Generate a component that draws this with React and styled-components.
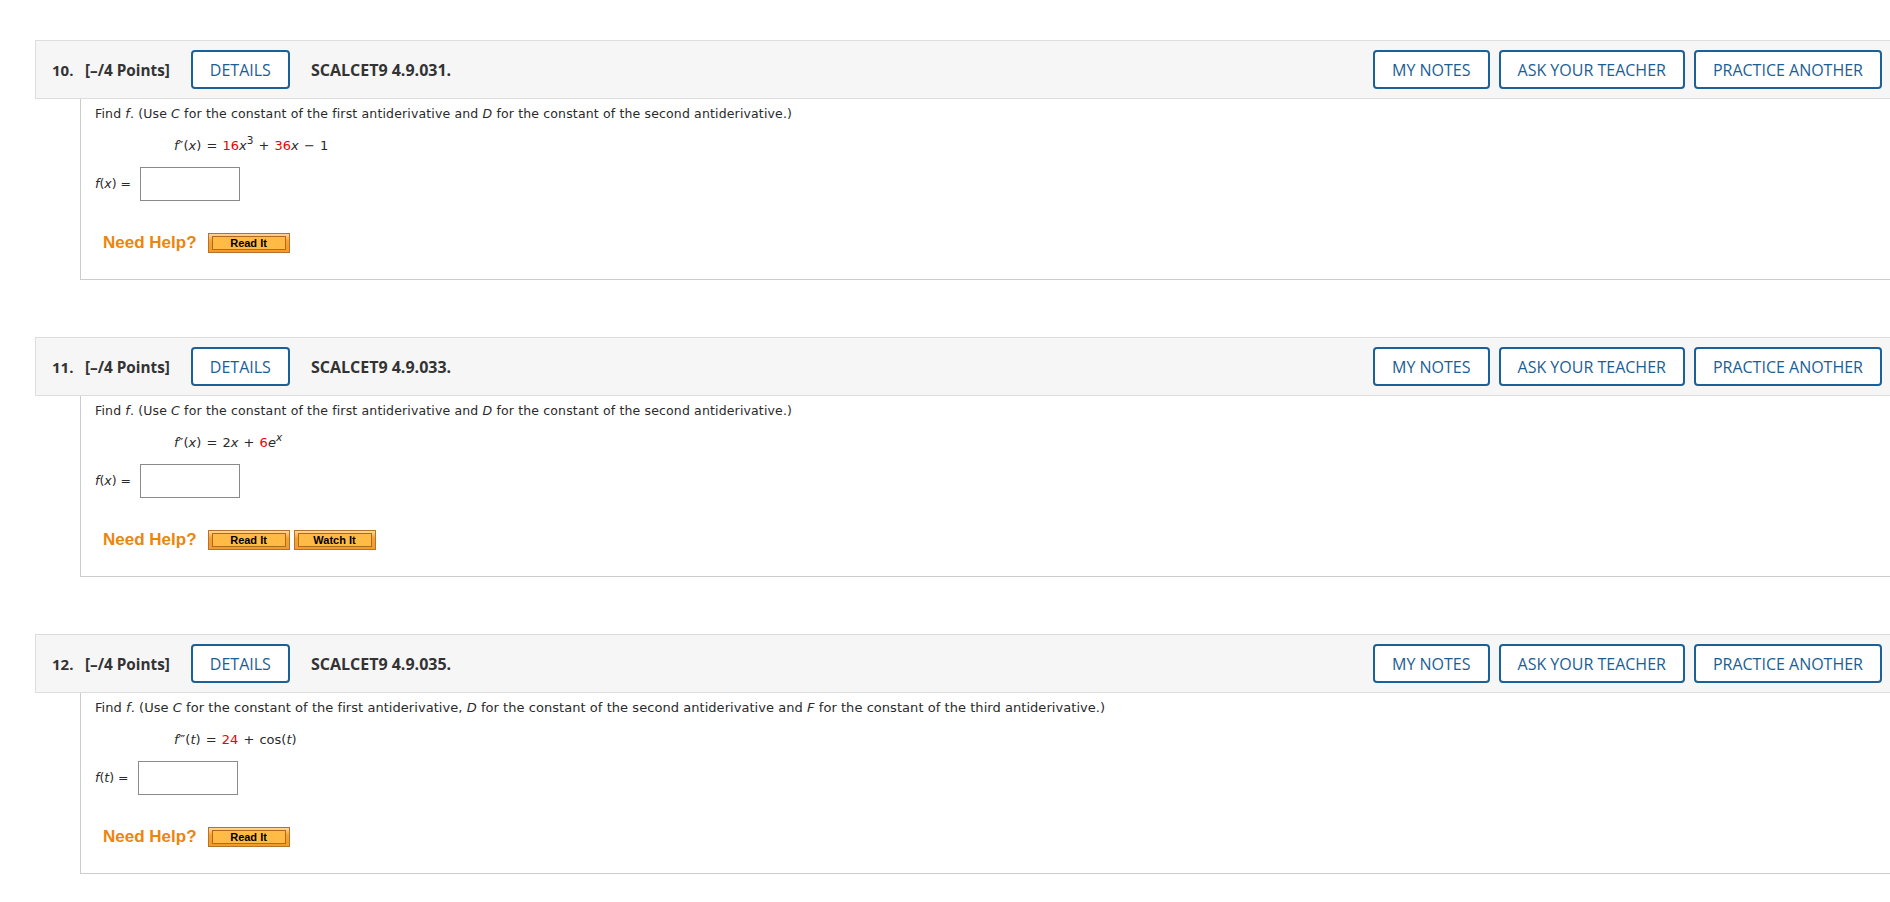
import React from 'react';
import styled, { createGlobalStyle } from 'styled-components';

const GlobalStyle = createGlobalStyle`
  body {
    margin: 0;
    background: #fff;
    font-family: "DejaVu Sans", Verdana, sans-serif;
  }
`;

const Page = styled.div`
  padding: 40px 0 30px 35px;
  display: flex;
  flex-direction: column;
  gap: 57px;
`;

const Question = styled.section``;

const Header = styled.div`
  display: flex;
  align-items: center;
  height: 57px;
  padding: 0 8px 0 16px;
  background: #f6f6f6;
  border: 1px solid #dddddd;
  border-right: none;
  font-family: "Open Sans", sans-serif;
  font-size: 15px;
  color: #333;
`;

const Number = styled.span`
  width: 33px;
  font-weight: 700;
`;

const Points = styled.span`
  font-weight: 700;
  font-size: 15.3px;
  margin-right: 21px;
`;

const Title = styled.span`
  flex: 1;
  margin-left: 21px;
  font-weight: 700;
  font-size: 16px;
`;

const Actions = styled.div`
  display: flex;
  gap: 9px;
`;

const OutlineButton = styled.button`
  height: 39px;
  padding: 0 17px;
  border: 2px solid #1b6197;
  border-radius: 4px;
  background: #fff;
  color: #1b5e94;
  font-family: "Open Sans", sans-serif;
  font-size: 16px;
  font-weight: 500;
  cursor: pointer;
`;

const Body = styled.div`
  margin-left: 45px;
  padding: 6px 0 26px 14px;
  border-left: 1px solid #cccccc;
  border-bottom: 1px solid #cccccc;
  font-size: 12.5px;
  line-height: 18px;
  color: #2a2a2a;
`;

const Prompt = styled.p`
  margin: 0;
  font-size: ${(p) => p.$size}px;
  letter-spacing: ${(p) => p.$spacing}px;
`;

const Equation = styled.p`
  margin: 14px 0 0;
  padding-left: 79px;
  font-size: 13px;
  word-spacing: 1px;
`;

const Red = styled.span`
  color: #ee0000;
`;

const Sup = styled.sup`
  font-size: 10.5px;
  line-height: 0;
  vertical-align: 6px;
`;

const AnswerRow = styled.div`
  display: flex;
  align-items: center;
  gap: 9px;
  margin-top: 12px;
`;

const AnswerInput = styled.input`
  width: 100px;
  height: 34px;
  box-sizing: border-box;
  border: 1px solid #8a8a8a;
  border-radius: 0;
`;

const HelpRow = styled.div`
  display: flex;
  align-items: center;
  gap: 4px;
  margin-top: 32px;
  padding-left: 8px;
`;

const NeedHelp = styled.span`
  margin-right: 7px;
  font-family: "Liberation Sans", Arial, sans-serif;
  font-weight: 700;
  font-size: 17px;
  color: #ec850b;
`;

const HelpButton = styled.button`
  width: 82px;
  height: 20px;
  box-sizing: border-box;
  padding: 2px 3px;
  border: 1px solid #b5722c;
  background: linear-gradient(#ffd79a, #f6a133 40%, #f39a2a);
  cursor: pointer;
`;

const HelpInner = styled.span`
  display: block;
  height: 100%;
  box-sizing: border-box;
  border: 1px solid #b06a1e;
  background: #ffbb45;
  font-family: "Liberation Sans", Arial, sans-serif;
  font-weight: 700;
  font-size: 11px;
  line-height: 12px;
  color: #000;
`;

const questions = [
  {
    num: '10.',
    code: 'SCALCET9 4.9.031.',
    promptSize: 12.5,
    promptSpacing: 0.15,
    prompt: (
      <>
        Find <i>f</i>. (Use <i>C</i> for the constant of the first antiderivative and <i>D</i> for the constant of the second antiderivative.)
      </>
    ),
    eq: (
      <>
        <i>f</i>″(<i>x</i>) = <Red>16</Red><i>x</i><Sup>3</Sup> + <Red>36</Red><i>x</i> − 1
      </>
    ),
    label: (
      <>
        <i>f</i>(<i>x</i>) =
      </>
    ),
    help: ['Read It'],
  },
  {
    num: '11.',
    code: 'SCALCET9 4.9.033.',
    promptSize: 12.5,
    promptSpacing: 0.15,
    prompt: (
      <>
        Find <i>f</i>. (Use <i>C</i> for the constant of the first antiderivative and <i>D</i> for the constant of the second antiderivative.)
      </>
    ),
    eq: (
      <>
        <i>f</i>″(<i>x</i>) = 2<i>x</i> + <Red>6</Red><i>e</i><Sup><i>x</i></Sup>
      </>
    ),
    label: (
      <>
        <i>f</i>(<i>x</i>) =
      </>
    ),
    help: ['Read It', 'Watch It'],
  },
  {
    num: '12.',
    code: 'SCALCET9 4.9.035.',
    promptSize: 13,
    promptSpacing: 0.05,
    prompt: (
      <>
        Find <i>f</i>. (Use <i>C</i> for the constant of the first antiderivative, <i>D</i> for the constant of the second antiderivative and <i>F</i> for the constant of the third antiderivative.)
      </>
    ),
    eq: (
      <>
        <i>f</i>‴(<i>t</i>) = <Red>24</Red> + cos(<i>t</i>)
      </>
    ),
    label: (
      <>
        <i>f</i>(<i>t</i>) =
      </>
    ),
    help: ['Read It'],
  },
];

const App = () => {
  return (
    <>
      <GlobalStyle />
      <Page>
        {questions.map((q) => (
          <Question key={q.num}>
            <Header>
              <Number>{q.num}</Number>
              <Points>[–/4 Points]</Points>
              <OutlineButton>DETAILS</OutlineButton>
              <Title>{q.code}</Title>
              <Actions>
                <OutlineButton>MY NOTES</OutlineButton>
                <OutlineButton>ASK YOUR TEACHER</OutlineButton>
                <OutlineButton>PRACTICE ANOTHER</OutlineButton>
              </Actions>
            </Header>
            <Body>
              <Prompt $size={q.promptSize} $spacing={q.promptSpacing}>
                {q.prompt}
              </Prompt>
              <Equation>{q.eq}</Equation>
              <AnswerRow>
                <span>{q.label}</span>
                <AnswerInput type="text" />
              </AnswerRow>
              <HelpRow>
                <NeedHelp>Need Help?</NeedHelp>
                {q.help.map((h) => (
                  <HelpButton key={h}>
                    <HelpInner>{h}</HelpInner>
                  </HelpButton>
                ))}
              </HelpRow>
            </Body>
          </Question>
        ))}
      </Page>
    </>
  );
};

export default App;
